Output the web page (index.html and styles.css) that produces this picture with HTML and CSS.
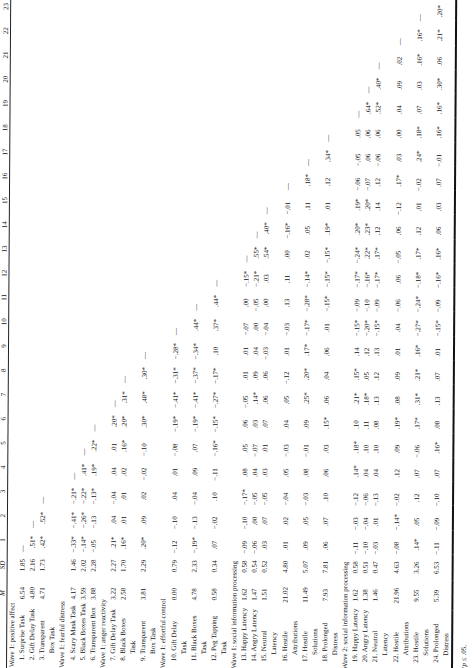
FILE: index.html
```html
<!DOCTYPE html>
<html>
<head>
<meta charset="utf-8">
<link rel="stylesheet" href="styles.css">
</head>
<body>
<div class="page">
<table class="corr">
<colgroup>
<col class="c-lab"><col class="c-m"><col class="c-sd">
<col class="c-v"><col class="c-v"><col class="c-v"><col class="c-v"><col class="c-v"><col class="c-v"><col class="c-v"><col class="c-v">
<col class="c-v"><col class="c-v"><col class="c-v"><col class="c-v"><col class="c-v"><col class="c-v"><col class="c-v"><col class="c-v">
<col class="c-v"><col class="c-v"><col class="c-v"><col class="c-v"><col class="c-v"><col class="c-v"><col class="c-v"><col class="c-v">
</colgroup>
<thead>
<tr><th></th><th><i>M</i></th><th><i>SD</i></th><th>1</th><th>2</th><th>3</th><th>4</th><th>5</th><th>6</th><th>7</th><th>8</th><th>9</th><th>10</th><th>11</th><th>12</th><th>13</th><th>14</th><th>15</th><th>16</th><th>17</th><th>18</th><th>19</th><th>20</th><th>21</th><th>22</th><th>23</th><th>24</th></tr>
</thead>
<tbody>
<tr><td class="grp" colspan="27">Wave 1: positive affect</td></tr>
<tr><td class="lab">1. Surprise Task</td><td class="n">6.54</td><td class="n">1.85</td><td>—</td></tr>
<tr><td class="lab">2. Gift Delay Task</td><td class="n">4.80</td><td class="n">2.16</td><td class="p">.51*</td><td>—</td></tr>
<tr><td class="lab">3. Transparent<br>Box Task</td><td class="n">4.71</td><td class="n">1.73</td><td class="p">.42*</td><td class="p">.52*</td><td>—</td></tr>
<tr><td class="grp" colspan="27">Wave 1: fearful distress</td></tr>
<tr><td class="lab">4. Scary Mask Task</td><td class="n">4.17</td><td class="n">1.46</td><td>−.33*</td><td>−.41*</td><td>−.21*</td><td>—</td></tr>
<tr><td class="lab">5. Black Boxes Task</td><td class="n">3.59</td><td class="n">2.02</td><td>−.14*</td><td>−.26*</td><td>−.22*</td><td class="p">.41*</td><td>—</td></tr>
<tr><td class="lab">6. Transparent Box</td><td class="n">3.88</td><td class="n">2.28</td><td>−.05</td><td>−.13</td><td>−.13*</td><td class="p">.19*</td><td class="p">.22*</td><td>—</td></tr>
<tr><td class="grp" colspan="27">Wave 1: anger reactivity</td></tr>
<tr><td class="lab">7. Gift Delay Task</td><td class="n">3.22</td><td class="n">2.27</td><td class="p">.21*</td><td class="p">.04</td><td>−.04</td><td class="p">.04</td><td class="p">.01</td><td class="p">.20*</td><td>—</td></tr>
<tr><td class="lab">8. Black Boxes<br>Task</td><td class="n">2.58</td><td class="n">1.70</td><td class="p">.16*</td><td class="p">.01</td><td class="p">.01</td><td class="p">.02</td><td class="p">.16*</td><td class="p">.20*</td><td class="p">.31*</td><td>—</td></tr>
<tr><td class="lab">9. Transparent<br>Box Task</td><td class="n">3.81</td><td class="n">2.29</td><td class="p">.20*</td><td class="p">.09</td><td class="p">.02</td><td>−.02</td><td>−.10</td><td class="p">.30*</td><td class="p">.48*</td><td class="p">.30*</td><td>—</td></tr>
<tr><td class="grp" colspan="27">Wave 1: effortful control</td></tr>
<tr><td class="lab">10. Gift Delay<br>Task</td><td class="n">0.00</td><td class="n">0.79</td><td>−.12</td><td>−.10</td><td class="p">.04</td><td class="p">.01</td><td>−.08</td><td>−.19*</td><td>−.41*</td><td>−.31*</td><td>−.28*</td><td>—</td></tr>
<tr><td class="lab">11. Black Boxes<br>Task</td><td class="n">4.78</td><td class="n">2.33</td><td>−.19*</td><td>−.13</td><td>−.04</td><td class="p">.09</td><td class="p">.07</td><td>−.19*</td><td>−.41*</td><td>−.37*</td><td>−.34*</td><td class="p">.44*</td><td>—</td></tr>
<tr><td class="lab">12. Peg Tapping<br>Task</td><td class="n">0.58</td><td class="n">0.34</td><td class="p">.07</td><td>−.02</td><td class="p">.10</td><td>−.11</td><td>−.16*</td><td>−.15*</td><td>−.27*</td><td>−.17*</td><td class="p">.10</td><td class="p">.37*</td><td class="p">.44*</td><td>—</td></tr>
<tr><td class="grp" colspan="27">Wave 1: social information processing</td></tr>
<tr><td class="lab">13. Happy Latency</td><td class="n">1.62</td><td class="n">0.58</td><td>−.09</td><td>−.10</td><td>−.17*</td><td class="p">.08</td><td class="p">.05</td><td class="p">.06</td><td>−.05</td><td class="p">.01</td><td class="p">.01</td><td>−.07</td><td class="p">.00</td><td>−.15*</td><td>—</td></tr>
<tr><td class="lab">14. Angry Latency</td><td class="n">1.47</td><td class="n">0.54</td><td>−.06</td><td class="p">.00</td><td>−.05</td><td class="p">.04</td><td>−.07</td><td class="p">.03</td><td class="p">.14*</td><td class="p">.09</td><td class="p">.04</td><td class="p">.00</td><td>−.05</td><td>−.21*</td><td class="p">.55*</td><td>—</td></tr>
<tr><td class="lab">15. Neutral<br>Latency</td><td class="n">1.51</td><td class="n">0.52</td><td class="p">.03</td><td class="p">.07</td><td>−.05</td><td class="p">.03</td><td class="p">.01</td><td class="p">.07</td><td class="p">.06</td><td class="p">.06</td><td>−.03</td><td>−.04</td><td class="p">.00</td><td class="p">.03</td><td class="p">.54*</td><td class="p">.40*</td><td>—</td></tr>
<tr><td class="lab">16. Hostile<br>Attributions</td><td class="n">21.02</td><td class="n">4.80</td><td class="p">.01</td><td class="p">.02</td><td>−.04</td><td class="p">.05</td><td>−.03</td><td class="p">.04</td><td class="p">.05</td><td>−.12</td><td class="p">.01</td><td>−.03</td><td class="p">.13</td><td class="p">.11</td><td class="p">.00</td><td>−.16*</td><td>−.01</td><td>—</td></tr>
<tr><td class="lab">17. Hostile<br>Solutions</td><td class="n">11.49</td><td class="n">5.07</td><td class="p">.09</td><td class="p">.05</td><td>−.03</td><td class="p">.08</td><td>−.01</td><td class="p">.09</td><td class="p">.25*</td><td class="p">.20*</td><td class="p">.17*</td><td>−.17*</td><td>−.28*</td><td>−.14*</td><td class="p">.02</td><td class="p">.05</td><td class="p">.11</td><td class="p">.18*</td><td>—</td></tr>
<tr><td class="lab">18. Prolonged<br>Distress</td><td class="n">7.93</td><td class="n">7.81</td><td class="p">.06</td><td class="p">.07</td><td class="p">.10</td><td class="p">.06</td><td class="p">.03</td><td class="p">.15*</td><td class="p">.06</td><td class="p">.04</td><td class="p">.06</td><td class="p">.01</td><td>−.15*</td><td>−.15*</td><td>−.15*</td><td class="p">.19*</td><td class="p">.01</td><td class="p">.12</td><td class="p">.34*</td><td>—</td></tr>
<tr><td class="grp" colspan="27">Wave 2: social information processing</td></tr>
<tr><td class="lab">19. Happy Latency</td><td class="n">1.62</td><td class="n">0.58</td><td>−.11</td><td>−.03</td><td>−.12</td><td class="p">.14*</td><td class="p">.18*</td><td class="p">.10</td><td class="p">.21*</td><td class="p">.15*</td><td class="p">.14</td><td>−.15*</td><td>−.09</td><td>−.17*</td><td>−.24*</td><td class="p">.20*</td><td class="p">.19*</td><td>−.06</td><td>−.05</td><td class="p">.05</td><td>—</td></tr>
<tr><td class="lab">20. Angry Latency</td><td class="n">1.38</td><td class="n">0.51</td><td>−.10</td><td>−.04</td><td>−.06</td><td class="p">.04</td><td class="p">.10</td><td class="p">.11</td><td class="p">.18*</td><td class="p">.05</td><td class="p">.12</td><td>−.20*</td><td>−.10</td><td>−.16*</td><td class="p">.22*</td><td class="p">.23*</td><td class="p">.20*</td><td>−.07</td><td class="p">.06</td><td class="p">.06</td><td class="p">.64*</td><td>—</td></tr>
<tr><td class="lab">21. Neutral<br>Latency</td><td class="n">1.46</td><td class="n">0.47</td><td>−.03</td><td class="p">.01</td><td>−.13</td><td class="p">.04</td><td class="p">.10</td><td class="p">.08</td><td class="p">.13</td><td class="p">.12</td><td class="p">.13</td><td>−.15*</td><td>−.09</td><td>−.17*</td><td class="p">.17*</td><td class="p">.12</td><td class="p">.14</td><td class="p">.12</td><td>−.06</td><td class="p">.06</td><td class="p">.52*</td><td class="p">.40*</td><td>—</td></tr>
<tr><td class="lab">22. Hostile<br>Attributions</td><td class="n">21.96</td><td class="n">4.63</td><td>−.08</td><td>−.14*</td><td>−.02</td><td class="p">.12</td><td class="p">.09</td><td class="p">.19*</td><td class="p">.08</td><td class="p">.09</td><td class="p">.01</td><td class="p">.04</td><td>−.06</td><td class="p">.06</td><td>−.05</td><td class="p">.06</td><td>−.12</td><td class="p">.17*</td><td class="p">.03</td><td class="p">.00</td><td class="p">.04</td><td class="p">.09</td><td class="p">.02</td><td>—</td></tr>
<tr><td class="lab">23. Hostile<br>Solutions</td><td class="n">9.55</td><td class="n">3.26</td><td class="p">.14*</td><td class="p">.05</td><td class="p">.12</td><td class="p">.07</td><td>−.06</td><td class="p">.17*</td><td class="p">.31*</td><td class="p">.21*</td><td class="p">.16*</td><td>−.27*</td><td>−.24*</td><td>−.18*</td><td class="p">.17*</td><td class="p">.12</td><td class="p">.01</td><td>−.02</td><td class="p">.24*</td><td class="p">.18*</td><td class="p">.07</td><td class="p">.03</td><td class="p">.16*</td><td class="p">.16*</td><td>—</td></tr>
<tr class="last"><td class="lab">24. Prolonged<br>Distress</td><td class="n">5.39</td><td class="n">6.53</td><td>−.11</td><td>−.09</td><td>−.10</td><td class="p">.07</td><td class="p">.16*</td><td class="p">.08</td><td class="p">.13</td><td class="p">.07</td><td class="p">.01</td><td>−.15*</td><td>−.09</td><td>−.16*</td><td class="p">.16*</td><td class="p">.06</td><td class="p">.03</td><td class="p">.07</td><td>−.01</td><td class="p">.16*</td><td class="p">.16*</td><td class="p">.30*</td><td class="p">.06</td><td class="p">.21*</td><td class="p">.20*</td><td>—</td></tr>
</tbody>
</table>
<p class="note">*<i>p</i> ≤ .05.</p>
</div>
</body>
</html>
```

FILE: styles.css
```css
html, body {
  margin: 0;
  padding: 0;
  width: 474px;
  height: 668px;
  overflow: hidden;
  background: #ffffff;
}

.page {
  width: 698px;
  transform-origin: 0 0;
  transform: translate(-4px, 668px) rotate(-89.64deg);
  font-family: "Liberation Serif", "Times New Roman", serif;
  font-size: 7px;
  line-height: 10.1px;
  color: #111111;
}

.corr {
  width: 698px;
  table-layout: fixed;
  border-collapse: collapse;
}

.c-lab { width: 60px; }
.c-m { width: 30px; }
.c-sd { width: 26px; }
.c-v { width: 24.25px; }

.corr th {
  height: 10px;
  padding: 0;
  font-weight: normal;
  text-align: center;
  vertical-align: bottom;
  line-height: 8px;
  border-bottom: 1px solid #222222;
}

.corr td {
  padding: 0;
  vertical-align: top;
  text-align: left;
  white-space: nowrap;
}

.corr td.grp {
  padding-left: 1px;
}

.corr td.lab {
  padding-left: 15px;
  text-indent: -7px;
}

.corr td.n {
  text-align: center;
}

.corr td.p {
  padding-left: 0.564em;
}

.corr tr.last td {
  border-bottom: 2px solid #111111;
}

.note {
  margin: 6px 0 0 0;
  padding-left: 1px;
}
```
